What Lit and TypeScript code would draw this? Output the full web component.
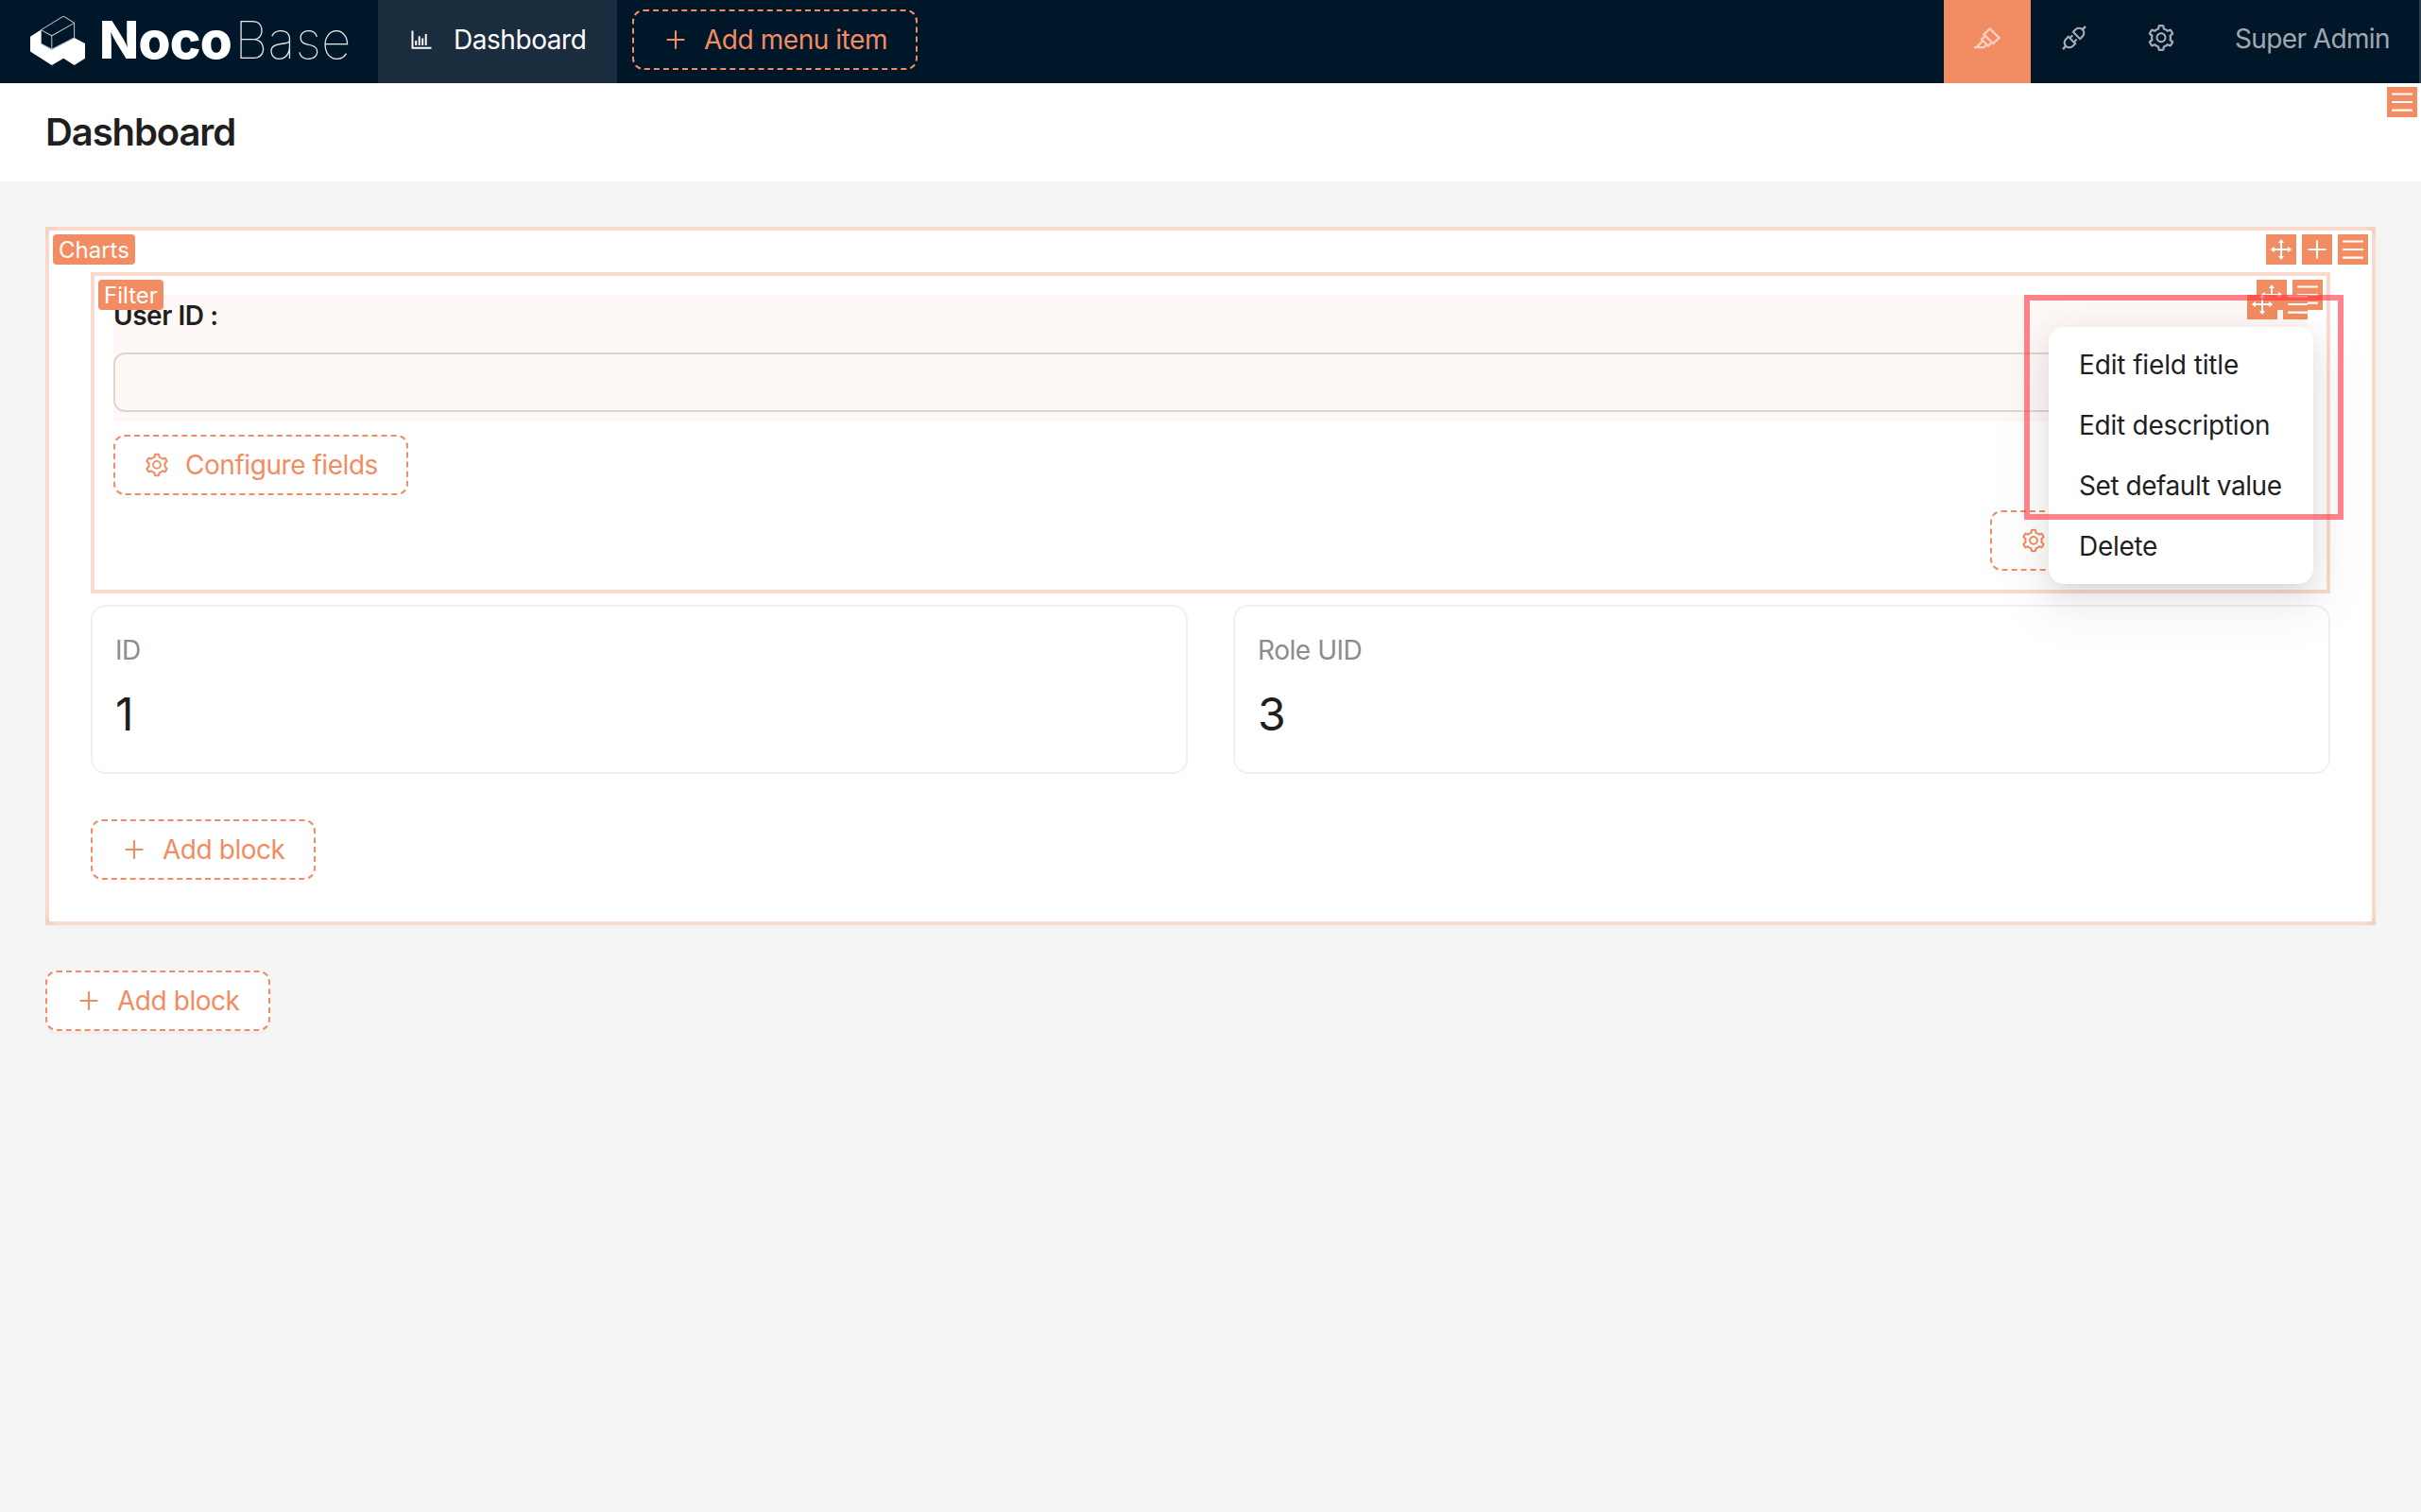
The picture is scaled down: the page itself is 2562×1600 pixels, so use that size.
import { LitElement, html, css, svg } from "lit";
import { customElement } from "lit/decorators.js";

const P = {
  chart: "M888 792H200V168c0-4.4-3.6-8-8-8h-56c-4.4 0-8 3.6-8 8v688c0 4.4 3.6 8 8 8h752c4.4 0 8-3.6 8-8v-56c0-4.4-3.6-8-8-8zm-616-64h56c4.4 0 8-3.6 8-8V560c0-4.4-3.6-8-8-8h-56c-4.4 0-8 3.6-8 8v160c0 4.4 3.6 8 8 8zm128 0h56c4.4 0 8-3.6 8-8V384c0-4.4-3.6-8-8-8h-56c-4.4 0-8 3.6-8 8v336c0 4.4 3.6 8 8 8zm128 0h56c4.4 0 8-3.6 8-8V462c0-4.4-3.6-8-8-8h-56c-4.4 0-8 3.6-8 8v258c0 4.4 3.6 8 8 8zm128 0h56c4.4 0 8-3.6 8-8V304c0-4.4-3.6-8-8-8h-56c-4.4 0-8 3.6-8 8v416c0 4.4 3.6 8 8 8z",
  plus: "M482 152h60q8 0 8 8v704q0 8-8 8h-60q-8 0-8-8V160q0-8 8-8zM176 474h672q8 0 8 8v60q0 8-8 8H176q-8 0-8-8v-60q0-8 8-8z",
  highlight: "M957.6 507.4L603.2 158.2a7.9 7.9 0 00-11.2 0L353.3 393.4a8.03 8.03 0 00-.1 11.3l.1.1 40 39.4-117.2 115.3a8.03 8.03 0 00-.1 11.3l.1.1 39.5 38.9-189.1 187H72.1c-4.4 0-8.1 3.6-8.1 8V860c0 4.4 3.6 8 8 8h344.9c2.1 0 4.1-.8 5.6-2.3l76.1-75.6 40.4 39.8a7.9 7.9 0 0011.2 0l117.1-115.6 40.1 39.5a7.9 7.9 0 0011.2 0l238.7-235.2c3.4-3 3.4-8 .3-11.2zM389.8 796.2H229.6l134.4-133 80.1 78.9-54.3 54.1zm154.8-62.1L373.2 565.2l68.6-67.6 171.4 168.9-68.6 67.6zM713.1 658L450.3 399.1 597.6 254l262.8 259-147.3 145z",
  api: "M917.7 148.8l-42.4-42.4c-1.6-1.6-3.6-2.3-5.7-2.3s-4.1.8-5.7 2.3l-76.1 76.1a199.27 199.27 0 00-112.1-34.3c-51.2 0-102.4 19.5-141.5 58.6L432.3 308.7a8.03 8.03 0 000 11.3L704 591.7c1.6 1.6 3.6 2.3 5.7 2.3 2 0 4.1-.8 5.7-2.3l101.9-101.9c68.9-69 77-175.7 24.3-253.5l76.1-76.1c3.1-3.2 3.1-8.3 0-11.4zM769.1 441.7l-59.4 59.4-186.8-186.8 59.4-59.4c24.9-24.9 58.1-38.7 93.4-38.7 35.3 0 68.4 13.7 93.4 38.7 24.9 24.9 38.7 58.1 38.7 93.4 0 35.3-13.8 68.4-38.7 93.4zm-190.2 105a8.03 8.03 0 00-11.3 0L501 613.3 410.7 523l66.7-66.7c3.1-3.1 3.1-8.2 0-11.3L441 408.6a8.03 8.03 0 00-11.3 0L363 475.3l-43-43a7.85 7.85 0 00-5.7-2.3c-2 0-4.1.8-5.7 2.3L206.8 534.2c-68.9 69-77 175.7-24.3 253.5l-76.1 76.1a8.03 8.03 0 000 11.3l42.4 42.4c1.6 1.6 3.6 2.3 5.7 2.3s4.1-.8 5.7-2.3l76.1-76.1c33.7 22.9 72.9 34.3 112.1 34.3 51.2 0 102.4-19.5 141.5-58.6l101.9-101.9c3.1-3.1 3.1-8.2 0-11.3l-43-43 66.7-66.7c3.1-3.1 3.1-8.2 0-11.3l-36.6-36.2zM441.7 769.1a131.32 131.32 0 01-93.4 38.7c-35.3 0-68.4-13.7-93.4-38.7a131.32 131.32 0 01-38.7-93.4c0-35.3 13.7-68.4 38.7-93.4l59.4-59.4 186.8 186.8-59.4 59.4z",
  setting: "M924.8 625.7l-65.5-56c3.1-19 4.7-38.4 4.7-57.8s-1.6-38.8-4.7-57.8l65.5-56a32.03 32.03 0 009.3-35.2l-.9-2.6a443.74 443.74 0 00-79.7-137.9l-1.8-2.1a32.12 32.12 0 00-35.1-9.5l-81.3 28.9c-30-24.6-63.5-44-99.7-57.6l-15.7-85a32.05 32.05 0 00-25.8-25.7l-2.7-.5c-52.1-9.4-106.9-9.4-159 0l-2.7.5a32.05 32.05 0 00-25.8 25.7l-15.8 85.4a351.86 351.86 0 00-99 57.4l-81.9-29.1a32 32 0 00-35.1 9.5l-1.8 2.1a446.02 446.02 0 00-79.7 137.9l-.9 2.6c-4.5 12.5-.8 26.5 9.3 35.2l66.3 56.6c-3.1 18.8-4.6 38-4.6 57.1 0 19.2 1.5 38.4 4.6 57.1L99 625.5a32.03 32.03 0 00-9.3 35.2l.9 2.6c18.1 50.4 44.9 96.9 79.7 137.9l1.8 2.1a32.12 32.12 0 0035.1 9.5l81.9-29.1c29.8 24.5 63.1 43.9 99 57.4l15.8 85.4a32.05 32.05 0 0025.8 25.7l2.7.5a449.4 449.4 0 00159 0l2.7-.5a32.05 32.05 0 0025.8-25.7l15.7-85a350 350 0 0099.7-57.6l81.3 28.9a32 32 0 0035.1-9.5l1.8-2.1c34.8-41.1 61.6-87.5 79.7-137.9l.9-2.6c4.5-12.3.8-26.3-9.3-35zM788.3 465.9c2.5 15.1 3.8 30.6 3.8 46.1s-1.3 31-3.8 46.1l-6.6 40.1 74.7 63.9a370.03 370.03 0 01-42.6 73.6L721 702.8l-31.4 25.8c-23.9 19.6-50.5 35-79.3 45.8l-38.1 14.3-17.9 97a377.5 377.5 0 01-85 0l-17.9-97.2-37.8-14.5c-28.5-10.8-55-26.2-78.7-45.7l-31.4-25.9-93.4 33.2c-17-22.9-31.2-47.6-42.6-73.6l75.5-64.5-6.5-40c-2.4-14.9-3.7-30.3-3.7-45.5 0-15.3 1.2-30.6 3.7-45.5l6.5-40-75.5-64.5c11.3-26.1 25.6-50.7 42.6-73.6l93.4 33.2 31.4-25.9c23.7-19.5 50.2-34.9 78.7-45.7l37.9-14.3 17.9-97.2c28.1-3.2 56.8-3.2 85 0l17.9 97 38.1 14.3c28.7 10.8 55.4 26.2 79.3 45.8l31.4 25.8 92.8-32.9c17 22.9 31.2 47.6 42.6 73.6L781.8 426l6.5 39.9zM512 326c-97.2 0-176 78.8-176 176s78.8 176 176 176 176-78.8 176-176-78.8-176-176-176zm79.2 255.2A111.6 111.6 0 01512 614c-29.9 0-58-11.7-79.2-32.8A111.6 111.6 0 01400 502c0-29.9 11.7-58 32.8-79.2C454 401.6 482.1 390 512 390c29.9 0 58 11.6 79.2 32.8A111.6 111.6 0 01624 502c0 29.9-11.7 58-32.8 79.2z",
  drag: "M909.3 506.3L781.7 405.6a7.23 7.23 0 00-11.7 5.7V476H548V254h64.8c6 0 9.4-7 5.7-11.7L517.7 114.7a7.14 7.14 0 00-11.3 0L405.6 242.3a7.23 7.23 0 005.7 11.7H476v222H254v-64.8c0-6-7-9.4-11.7-5.7L114.7 506.3a7.14 7.14 0 000 11.3l127.5 100.8c4.7 3.7 11.7.4 11.7-5.7V548h222v222h-64.8c-6 0-9.4 7-5.7 11.7l100.8 127.5c2.9 3.7 8.5 3.7 11.3 0l100.8-127.5c3.7-4.7.4-11.7-5.7-11.7H548V548h222v64.8c0 6 7 9.4 11.7 5.7l127.5-100.8a7.3 7.3 0 00.1-11.4z",
  menu: "M904 160H120c-4.4 0-8 3.6-8 8v64c0 4.4 3.6 8 8 8h784c4.4 0 8-3.6 8-8v-64c0-4.4-3.6-8-8-8zm0 624H120c-4.4 0-8 3.6-8 8v64c0 4.4 3.6 8 8 8h784c4.4 0 8-3.6 8-8v-64c0-4.4-3.6-8-8-8zm0-312H120c-4.4 0-8 3.6-8 8v64c0 4.4 3.6 8 8 8h784c4.4 0 8-3.6 8-8v-64c0-4.4-3.6-8-8-8z",
};

const icon = (d: string, cls = "") =>
  html`<svg class="icon ${cls}" viewBox="0 0 1024 1024" fill="currentColor" aria-hidden="true">${svg`<path d=${d}></path>`}</svg>`;

const sq = (d: string) => html`<span class="sq">${icon(d)}</span>`;

@customElement("app-root")
export class AppRoot extends LitElement {
  static styles = css`
    :host {
      display: block;
      font-family: Inter, "Liberation Sans", sans-serif;
      font-size: 28px;
      letter-spacing: -0.45px;
      color: #1f1f1f;
    }
    * { box-sizing: border-box; }
    .page { position: relative; min-height: 1600px; background: #f5f5f5; overflow: hidden; }
    .icon { width: 28px; height: 28px; display: block; flex: none; }

    header { height: 88px; background: #001629; display: flex; align-items: center; color: #fff; border-right: 2px solid #2a3c4e; }
    .logo { width: 400px; height: 88px; display: flex; align-items: center; padding-left: 32px; flex: none; }
    .logo svg { width: 58px; height: 52px; margin-right: 15px; margin-bottom: 2px; flex: none; }
    .logo .noco { font-size: 55px; font-weight: 800; color: #fff; letter-spacing: -0.7px; line-height: 1; margin-bottom: 3px; }
    .logo .base { font-size: 55px; font-weight: 100; color: #e4e7ea; letter-spacing: 0.2px; line-height: 1; margin-bottom: 3px; margin-left: 3px; }
    .nav { height: 88px; display: flex; align-items: center; gap: 20px; padding: 0 32px 4px; background: #1a2d3f; width: 253px; flex: none; }
    .btn {
      display: inline-flex; align-items: center; gap: 16px; height: 64px; padding: 0 30px;
      border: 2px dashed #f28c62; border-radius: 12px; color: #f28c62; background: #fff;
      box-shadow: 0 4px 0 rgba(0, 0, 0, 0.02); white-space: nowrap;
    }
    header .btn { background: transparent; box-shadow: none; margin: 0 0 4px 16px; }
    .actions { margin-left: auto; display: flex; align-items: stretch; height: 88px; position: relative; color: rgba(255, 255, 255, 0.65); }
    .actions::after { content: ""; position: absolute; top: 100%; left: 0; width: 276px; height: 4px; background: #fafafa; }
    .act { width: 92px; display: flex; align-items: center; justify-content: center; padding-bottom: 8px; }
    .act .icon { width: 32px; height: 32px; }
    .act.on { background: #f28c62; color: rgba(255, 255, 255, 0.6); }
    .user { padding: 0 31px 7px 32px; display: flex; align-items: center; white-space: nowrap; letter-spacing: -0.6px; }

    .titlebar { position: relative; background: #fff; height: 104px; padding: 0 48px; display: flex; align-items: center; }
    h1 { margin: 0; font-size: 40px; line-height: 56px; font-weight: 600; color: #1f1f1f; letter-spacing: -1.1px; }

    main { padding: 48px; display: flex; flex-direction: column; align-items: flex-start; gap: 48px; }
    .sq { width: 32px; height: 32px; background: #f28c62; color: #fff; display: flex; align-items: center; justify-content: center; flex: none; }
    .bar { position: absolute; top: 8px; right: 8px; display: flex; gap: 6px; z-index: 3; }
    .bar.page-bar { top: 4px; right: 4px; }
    .tag {
      position: absolute; top: 8px; left: 8px; height: 32px; padding: 0 6px; background: #f28c62; color: #fff;
      font-size: 24px; line-height: 33px; border-radius: 4px; z-index: 4; letter-spacing: 0;
    }
    .charts {
      position: relative; width: 100%; background: #fff; border-radius: 16px; padding: 48px;
      box-shadow: 0 4px 16px rgba(0, 0, 0, 0.02);
    }
    .charts::after, .filter::after {
      content: ""; position: absolute; inset: 0; border: 4px solid rgba(241, 139, 98, 0.32); pointer-events: none;
    }
    .filter { position: relative; padding: 24px; margin-bottom: 12px; background: #fff; }
    .item { position: relative; height: 134px; background: #fef9f6; overflow: hidden; }
    .item label { display: block; height: 44px; line-height: 44px; font-weight: 600; }
    .input { height: 63px; margin-top: 17px; border: 2px solid #dcd7d3; border-radius: 12px; }
    .item .bar { top: -6px; right: -6px; }
    .filter .conf { margin-top: 14px; }
    .row-end { display: flex; justify-content: flex-end; margin-top: 16px; }
    .row-end .btn { width: 336px; }
    .stats { display: grid; grid-template-columns: 1fr 1fr; gap: 48px; margin-bottom: 48px; }
    .stat { height: 179px; border: 2px solid #f0f0f0; border-radius: 16px; padding: 24px; background: #fff; }
    .stat .k { line-height: 44px; color: #8c8c8c; }
    .stat .v { font-size: 48px; line-height: 72px; margin-top: 10px; color: #1f1f1f; }

    .popup {
      position: absolute; left: 2168px; top: 346px; width: 280px; padding: 8px 0; background: #fff; border-radius: 16px; z-index: 6;
      box-shadow: 0 12px 32px rgba(0, 0, 0, 0.08), 0 6px 12px -8px rgba(0, 0, 0, 0.12), 0 18px 56px 16px rgba(0, 0, 0, 0.05);
    }
    .popup div { height: 64px; line-height: 64px; padding: 0 32px; white-space: nowrap; color: #1f1f1f; }
    .popup div:nth-child(1) { letter-spacing: -0.13px; }
    .popup div:nth-child(2) { letter-spacing: -0.25px; }
    .popup div:nth-child(4) { letter-spacing: -0.3px; }
    .mark { position: absolute; left: 2142px; top: 312px; width: 338px; height: 238px; border: 6px solid rgba(255, 50, 65, 0.6); z-index: 7; pointer-events: none; }
  `;

  render() {
    return html`
      <div class="page">
        <header>
          <div class="logo">
            <svg viewBox="32 17 56 50" aria-hidden="true">
              <path d="M32 38L43 31V45L54 51L77 39L88 45V60L77 67L66 60L54 67L32 53Z" fill="#fff"></path>
              <path d="M43 31L66 17L77 24V39L54 51L43 45ZM43 31L54 37L77 24M54 37V51" fill="none" stroke="#b9bec4" stroke-width="1"></path>
            </svg>
            <span class="noco">Noco</span><span class="base">Base</span>
          </div>
          <div class="nav">${icon(P.chart)}<span>Dashboard</span></div>
          <div class="btn">${icon(P.plus)}<span>Add menu item</span></div>
          <div class="actions">
            <div class="act on">${icon(P.highlight)}</div>
            <div class="act">${icon(P.api)}</div>
            <div class="act">${icon(P.setting)}</div>
            <div class="user">Super Admin</div>
          </div>
        </header>
        <div class="titlebar">
          <h1>Dashboard</h1>
          <div class="bar page-bar">${sq(P.menu)}</div>
        </div>
        <main>
          <section class="charts">
            <span class="tag">Charts</span>
            <div class="bar">${sq(P.drag)}${sq(P.plus)}${sq(P.menu)}</div>
            <div class="filter">
              <span class="tag">Filter</span>
              <div class="bar">${sq(P.drag)}${sq(P.menu)}</div>
              <div class="item">
                <label>User ID :</label>
                <div class="input"></div>
                <div class="bar">${sq(P.drag)}${sq(P.menu)}</div>
              </div>
              <div class="btn conf">${icon(P.setting)}<span>Configure fields</span></div>
              <div class="row-end">
                <div class="btn">${icon(P.setting)}</div>
              </div>
            </div>
            <div class="stats">
              <div class="stat"><div class="k">ID</div><div class="v">1</div></div>
              <div class="stat"><div class="k">Role UID</div><div class="v">3</div></div>
            </div>
            <div class="btn">${icon(P.plus)}<span>Add block</span></div>
          </section>
          <div class="btn">${icon(P.plus)}<span>Add block</span></div>
        </main>
        <div class="popup">
          <div>Edit field title</div>
          <div>Edit description</div>
          <div>Set default value</div>
          <div>Delete</div>
        </div>
        <div class="mark"></div>
      </div>
    `;
  }
}
